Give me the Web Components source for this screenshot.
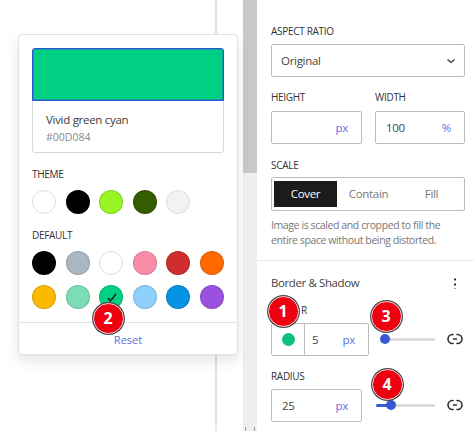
<!DOCTYPE html>
<html>
<head>
<meta charset="utf-8">
<title>Image settings</title>
<style>
  html, body { margin: 0; padding: 0; background: #fff; }
  body { font-family: "Open Sans", "Noto Sans", sans-serif; color: #3c3c3c; overflow: hidden; }
</style>
</head>
<body>
<editor-shell></editor-shell>
<script>
const LINK_ICON = `<svg width="24" height="24" viewBox="0 0 24 24" fill="none" stroke="#2f2f2f" stroke-width="1.6" stroke-linecap="round">
  <path d="M10 7.5H9.5a4.5 4.5 0 0 0 0 9h.5"/><path d="M14 7.5h.5a4.5 4.5 0 0 1 0 9H14"/><path d="M10.5 12h3"/></svg>`;

class ColorDot extends HTMLElement {
  connectedCallback() {
    const color = this.getAttribute('color');
    const edge = this.getAttribute('edge') || 'rgba(0,0,0,.14)';
    this.attachShadow({ mode: 'open' }).innerHTML = `
      <style>
        :host { display: block; width: 24px; height: 24px; }
        .dot { width: 24px; height: 24px; box-sizing: border-box; border-radius: 50%; background: ${color}; border: 1px solid ${edge}; position: relative; }
        svg { position: absolute; left: -1px; top: -1px; }
      </style>
      <div class="dot">${this.hasAttribute('check') ? `<svg width="24" height="24" viewBox="0 0 24 24" fill="none" stroke="#161616" stroke-width="1.4"><path d="M9 13l2.5 3 5.5-7"/></svg>` : ''}</div>`;
  }
}

class SmallLabel extends HTMLElement {
  connectedCallback() {
    this.attachShadow({ mode: 'open' }).innerHTML = `
      <style>
        :host { display: block; font-size: 10px; letter-spacing: -.3px; line-height: 14px; color: #333; text-transform: uppercase; }
      </style>
      <slot></slot>`;
  }
}

class ColorPopover extends HTMLElement {
  connectedCallback() {
    const theme = ['#fff', '#000', '#96f522', '#345c00', '#f2f2f2'];
    const defaults = ['#000', '#abb8c3', '#fff', '#f78da7', '#cf2e2e', '#ff6900', '#fcb900', '#7bdcb5', '#00d084', '#8ed1fc', '#0693e3', '#9b51e0'];
    const dots = list => list.map(c => `<color-dot color="${c}"${c === '#00d084' ? ' check' : ''}${c === '#fff' || c === '#f2f2f2' ? ' edge="#ddd"' : ''}></color-dot>`).join('');
    this.attachShadow({ mode: 'open' }).innerHTML = `
      <style>
        :host { display: block; position: absolute; left: 18px; top: 34px; width: 220px; height: 321px; box-sizing: border-box; background: #fff; border: 1px solid #e2e2e2; border-radius: 4px; box-shadow: 0 6px 14px rgba(0,0,0,.11); }
        .body { padding: 13px 13px 0; }
        .card { border: 1px solid #d8d8d8; border-radius: 3px; height: 105px; box-sizing: border-box; }
        .swatch { height: 53px; margin: -1px -1px 0; background: #00d084; border: 1px solid #3050d8; box-shadow: inset 0 0 0 1px rgba(48,80,216,.35); box-sizing: border-box; border-radius: 3px 3px 0 0; }
        .name { margin: 11px 0 0 13px; font-size: 11.5px; letter-spacing: -.3px; line-height: 16px; color: #3a3a3a; }
        .hex { margin: 1px 0 0 13px; font-size: 10.5px; line-height: 16px; color: #8a8a8a; }
        small-label { margin-top: 14px; }
        .grid { display: grid; grid-template-columns: repeat(6, 24px); justify-content: space-between; row-gap: 9.6px; margin-top: 9px; }
        .foot { position: absolute; left: 0; right: 0; top: 287px; height: 33px; border-top: 1px solid #e0e0e0; text-align: center; font-size: 11px; line-height: 34px; color: #5b6fd8; }
      </style>
      <div class="body">
        <div class="card">
          <div class="swatch"></div>
          <div class="name">Vivid green cyan</div>
          <div class="hex">#00D084</div>
        </div>
        <small-label>Theme</small-label>
        <div class="grid">${dots(theme)}</div>
        <small-label>Default</small-label>
        <div class="grid">${dots(defaults)}</div>
      </div>
      <div class="foot">Reset</div>`;
  }
}

class UnitInput extends HTMLElement {
  connectedCallback() {
    const value = this.getAttribute('value') || '';
    const unit = this.getAttribute('unit');
    this.attachShadow({ mode: 'open' }).innerHTML = `
      <style>
        :host { display: block; height: 33px; box-sizing: border-box; border: 1px solid #bdbdbd; border-radius: 2px; }
        .box { display: flex; align-items: center; justify-content: space-between; height: 100%; padding: 0 13px 0 var(--pad-left, 10px); font-size: 11.5px; letter-spacing: -.3px; color: #444; }
        .unit { color: #5b6fd8; }
      </style>
      <div class="box"><span>${value}</span><span class="unit">${unit}</span></div>`;
  }
}

class SelectBox extends HTMLElement {
  connectedCallback() {
    this.attachShadow({ mode: 'open' }).innerHTML = `
      <style>
        :host { display: block; height: 33px; box-sizing: border-box; border: 1px solid #bdbdbd; border-radius: 2px; }
        .box { display: flex; align-items: center; justify-content: space-between; height: 100%; padding: 0 6px 0 9px; font-size: 11.5px; letter-spacing: -.3px; color: #444; }
      </style>
      <div class="box"><span>Original</span>
        <svg width="14" height="14" viewBox="0 0 14 14" fill="none" stroke="#333" stroke-width="1.3"><path d="M3.5 5.5L7 8.5l3.5-3"/></svg>
      </div>`;
  }
}

class ScaleTabs extends HTMLElement {
  connectedCallback() {
    this.attachShadow({ mode: 'open' }).innerHTML = `
      <style>
        :host { display: block; height: 34px; box-sizing: border-box; border: 1px solid #bdbdbd; border-radius: 2px; }
        .tabs { display: grid; grid-template-columns: repeat(3, 63px); height: 100%; padding: 3px 2px; box-sizing: border-box; font-size: 11.5px; letter-spacing: -.3px; color: #777; text-align: center; line-height: 26px; }
        .on { background: #1b1b1b; color: #fff; }
      </style>
      <div class="tabs"><div class="on">Cover</div><div>Contain</div><div>Fill</div></div>`;
  }
}

class RangeRow extends HTMLElement {
  connectedCallback() {
    const thumb = +this.getAttribute('thumb');
    const width = +this.getAttribute('width');
    this.attachShadow({ mode: 'open' }).innerHTML = `
      <style>
        :host { display: flex; align-items: center; justify-content: space-between; flex: 1; }
        .track { position: relative; width: ${width}px; height: 3px; background: #dcdcdc; border-radius: 2px; }
        .fill { position: absolute; left: 0; top: 0; height: 3px; width: ${thumb}px; background: #3858d6; border-radius: 2px; }
        .thumb { position: absolute; left: ${thumb - 5}px; top: -3.5px; width: 10px; height: 10px; border-radius: 50%; background: #3858d6; }
        svg { display: block; margin-right: -2px; }
      </style>
      <div class="track"><div class="fill"></div><div class="thumb"></div></div>
      ${LINK_ICON}`;
  }
}

class SettingsPanel extends HTMLElement {
  connectedCallback() {
    this.attachShadow({ mode: 'open' }).innerHTML = `
      <style>
        :host { display: block; flex: 1; min-width: 0; height: 431px; box-sizing: border-box; overflow: hidden; }
        .top { padding: 24px 9px 0 14px; }
        .pair { display: grid; grid-template-columns: 91px 90px; column-gap: 13px; }
        select-box { margin-top: 6px; }
        .pair.labels { margin-top: 13px; }
        .pair.inputs { margin-top: 7px; }
        .scale { margin-top: 14px; }
        scale-tabs { margin-top: 5px; }
        .help { margin-top: 7px; font-size: 10.5px; letter-spacing: -.4px; line-height: 15px; color: #777; }
        .rule { height: 1px; background: #e8e8e8; margin-top: 11.5px; }
        .bottom { padding: 0 9px 0 14px; }
        .head { display: flex; align-items: center; justify-content: space-between; margin-top: 13px; font-size: 11.5px; letter-spacing: -.4px; line-height: 18px; color: #444; }
        .dots { width: 2px; height: 12px; margin-right: 9px; background: radial-gradient(circle, #222 1px, transparent 1.2px) 0 0 / 2px 5px; }
        .r-label { margin-top: 11px; padding-left: 30px; }
        .row { display: flex; gap: 12px; margin-top: 6px; align-items: center; }
        .group { display: flex; width: 98px; height: 33px; box-sizing: border-box; border: 1px solid #bdbdbd; border-radius: 2px; }
        .pick { width: 32px; border-right: 1px solid #bdbdbd; display: flex; align-items: center; justify-content: center; }
        .spot { width: 13px; height: 13px; border-radius: 50%; background: #0fbf7d; }
        .group unit-input { flex: 1; height: 31px; border: 0; --pad-left: 7px; }
        .radius { margin-top: 13px; }
        .row.two { gap: 14px; }
        .row.two unit-input { width: 91px; flex: none; }
      </style>
      <div class="top">
        <small-label>Aspect ratio</small-label>
        <select-box></select-box>
        <div class="pair labels"><small-label>Height</small-label><small-label>Width</small-label></div>
        <div class="pair inputs"><unit-input unit="px"></unit-input><unit-input value="100" unit="%"></unit-input></div>
        <small-label class="scale">Scale</small-label>
        <scale-tabs></scale-tabs>
        <div class="help">Image is scaled and cropped to fill the<br>entire space without being distorted.</div>
      </div>
      <div class="rule"></div>
      <div class="bottom">
        <div class="head"><span>Border &amp; Shadow</span><div class="dots"></div></div>
        <small-label class="r-label">r</small-label>
        <div class="row">
          <div class="group"><div class="pick"><div class="spot"></div></div><unit-input value="5" unit="px"></unit-input></div>
          <range-row thumb="4" width="54"></range-row>
        </div>
        <small-label class="radius">Radius</small-label>
        <div class="row two">
          <unit-input value="25" unit="px"></unit-input>
          <range-row thumb="15" width="59"></range-row>
        </div>
      </div>`;
  }
}

class CalloutBadge extends HTMLElement {
  connectedCallback() {
    const x = +this.getAttribute('x');
    const y = +this.getAttribute('y');
    this.attachShadow({ mode: 'open' }).innerHTML = `
      <style>
        :host { display: block; position: absolute; left: ${x - 15.5}px; top: ${y - 15.5}px; width: 31px; height: 31px; box-sizing: border-box; border-radius: 50%; background: #ee0010; border: 1px solid #f4d0d0; box-shadow: 0 0 0 1px #4a4a4a; color: #fff; font: bold 16px/29px "Open Sans", sans-serif; text-align: center; }
      </style>
      <slot></slot>`;
  }
}

class EditorShell extends HTMLElement {
  connectedCallback() {
    this.attachShadow({ mode: 'open' }).innerHTML = `
      <style>
        :host { display: flex; position: relative; width: 474px; height: 431px; overflow: hidden; background: #fff; }
        .canvas { width: 217px; height: 431px; box-sizing: border-box; border-right: 2px solid #e4e4e4; flex: none; }
        .gap { width: 26px; flex: none; }
        .scrollbar { width: 14px; flex: none; height: 431px; background: #efefef; display: flex; flex-direction: column; }
        .thumb { height: 173px; background: #c8c8c8; }
        .grips { margin-top: auto; height: 4px; width: 8px; align-self: center; border-left: 1px solid #999; border-right: 1px solid #999; }
      </style>
      <div class="canvas"></div>
      <div class="gap"></div>
      <div class="scrollbar"><div class="thumb"></div><div class="grips"></div></div>
      <settings-panel></settings-panel>
      <color-popover></color-popover>
      <callout-badge x="283" y="311">1</callout-badge>
      <callout-badge x="108" y="318">2</callout-badge>
      <callout-badge x="386" y="316">3</callout-badge>
      <callout-badge x="387" y="384">4</callout-badge>`;
  }
}

customElements.define('color-dot', ColorDot);
customElements.define('small-label', SmallLabel);
customElements.define('color-popover', ColorPopover);
customElements.define('unit-input', UnitInput);
customElements.define('select-box', SelectBox);
customElements.define('scale-tabs', ScaleTabs);
customElements.define('range-row', RangeRow);
customElements.define('settings-panel', SettingsPanel);
customElements.define('callout-badge', CalloutBadge);
customElements.define('editor-shell', EditorShell);
</script>
</body>
</html>
